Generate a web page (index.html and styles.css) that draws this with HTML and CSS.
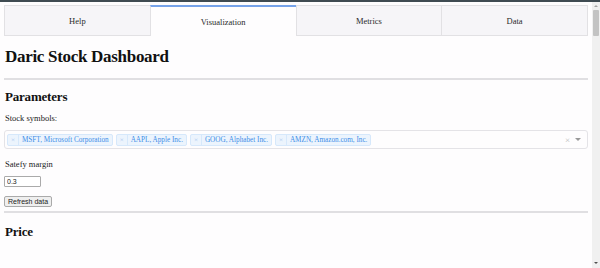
FILE: index.html
```html
<!DOCTYPE html>
<html>
<head>
<meta charset="utf-8">
<link rel="stylesheet" href="styles.css">
</head>
<body>
<div class="topbar"></div>
<div class="frame">
  <div class="page">
    <div class="tabs">
      <div class="tab">Help</div>
      <div class="tab selected">Visualization</div>
      <div class="tab">Metrics</div>
      <div class="tab">Data</div>
    </div>
    <h1 class="title">Daric Stock Dashboard</h1>
    <hr class="rule">
    <h2 class="section params">Parameters</h2>
    <p class="label">Stock symbols:</p>
    <div class="select">
      <div class="values">
        <span class="tag"><span class="tag-x">×</span><span class="tag-text">MSFT, Microsoft Corporation</span></span>
        <span class="tag"><span class="tag-x">×</span><span class="tag-text">AAPL, Apple Inc.</span></span>
        <span class="tag"><span class="tag-x">×</span><span class="tag-text">GOOG, Alphabet Inc.</span></span>
        <span class="tag"><span class="tag-x">×</span><span class="tag-text">AMZN, Amazon.com, Inc.</span></span>
      </div>
      <span class="clear">×</span>
      <span class="arrow"></span>
    </div>
    <p class="label label2">Satefy margin</p>
    <input class="num" type="text" value="0.3">
    <div class="btn-row"><button class="btn">Refresh data</button></div>
    <hr class="rule rule2">
    <h2 class="section price">Price</h2>
  </div>
  <div class="scrollbar">
    <div class="sb-up"></div>
    <div class="sb-thumb"></div>
    <div class="sb-track"></div>
    <div class="sb-down"></div>
  </div>
</div>
</body>
</html>
```

FILE: styles.css
```css
html, body {
  margin: 0;
  padding: 0;
  height: 268px;
  overflow: hidden;
  background: #fefdfe;
  font-family: "Liberation Serif", "Times New Roman", serif;
  color: #111;
}
.topbar {
  height: 2px;
  background: #3f4b52;
}
.frame {
  display: flex;
  height: 266px;
}
.page {
  flex: 1;
  padding: 3px 4px 0 4px;
  min-width: 0;
}
.tabs {
  display: flex;
  height: 31px;
}
.tab {
  flex: 1;
  display: flex;
  align-items: center;
  justify-content: center;
  background: #f6f5f8;
  border: 1px solid #e2e1e4;
  border-right: none;
  font-size: 8.5px;
  color: #2a2a2a;
  box-sizing: border-box;
}
.tab:last-child {
  border-right: 1px solid #e2e1e4;
}
.tab.selected {
  background: #fefdfe;
  border-top: 2px solid #76a3ea;
  border-bottom: none;
}
.title {
  font-size: 17px;
  letter-spacing: -0.3px;
  line-height: 20px;
  margin: 11px 0 0 1px;
  font-weight: bold;
}
.rule {
  border: none;
  height: 2px;
  background: #e0dfe2;
  margin: 11px 0 0 0;
}
.section {
  font-size: 13px;
  letter-spacing: -0.2px;
  line-height: 16px;
  margin: 11px 0 0 1px;
  font-weight: bold;
}
.params {
  margin-top: 9px;
}
.label {
  font-size: 8.5px;
  line-height: 10px;
  margin: 8px 0 0 1px;
  color: #222;
}
.label2 {
  margin-top: 10px;
}
.select {
  display: flex;
  align-items: center;
  margin-top: 7px;
  height: 19px;
  border: 1px solid #e4e3e7;
  border-radius: 3px;
  box-sizing: border-box;
  padding: 0 6px 0 2px;
}
.values {
  flex: 1;
  display: flex;
  gap: 3px;
}
.tag {
  display: flex;
  align-items: center;
  height: 12px;
  background: #ecf4fd;
  border: 1px solid #d6e8fb;
  border-radius: 2px;
  box-sizing: border-box;
  color: #3d8ee8;
  font-size: 7.2px;
}
.tag-x {
  padding: 0 3px;
  border-right: 1px solid #d6e8fb;
  height: 100%;
  display: flex;
  align-items: center;
  color: #9cc3ee;
  font-size: 7px;
}
.tag-text {
  padding: 0 3px;
}
.clear {
  color: #bbb;
  font-size: 9px;
  margin-right: 5px;
}
.arrow {
  width: 0;
  height: 0;
  border-left: 3px solid transparent;
  border-right: 3px solid transparent;
  border-top: 3px solid #999;
}
.num {
  display: block;
  margin: 7px 0 0 0;
  width: 37px;
  height: 11px;
  box-sizing: border-box;
  border: 1px solid #aaa;
  border-radius: 1px;
  padding: 0 2px;
  font-family: "Liberation Sans", Arial, sans-serif;
  font-size: 7px;
  color: #222;
  background: #fff;
}
.btn-row {
  margin-top: 9px;
}
.btn {
  display: block;
  height: 11px;
  width: 48px;
  padding: 0;
  box-sizing: border-box;
  border: 1px solid #aaa;
  border-radius: 2px;
  background: #efefef;
  font-family: "Liberation Sans", Arial, sans-serif;
  font-size: 7px;
  color: #222;
  line-height: 9px;
}
.rule2 {
  margin-top: 4px;
}
.price {
  margin-top: 11px;
}
.scrollbar {
  width: 8px;
  background: #f0f0f0;
  display: flex;
  flex-direction: column;
  align-items: center;
}
.sb-up {
  margin-top: 3px;
  width: 0;
  height: 0;
  border-left: 2px solid transparent;
  border-right: 2px solid transparent;
  border-bottom: 2px solid #a3a3a3;
}
.sb-thumb {
  margin-top: 3px;
  width: 6px;
  height: 26px;
  background: #c3c3c3;
  border-radius: 1px;
}
.sb-track {
  flex: 1;
}
.sb-down {
  margin-bottom: 4px;
  width: 0;
  height: 0;
  border-left: 2px solid transparent;
  border-right: 2px solid transparent;
  border-top: 2px solid #505050;
}
```
